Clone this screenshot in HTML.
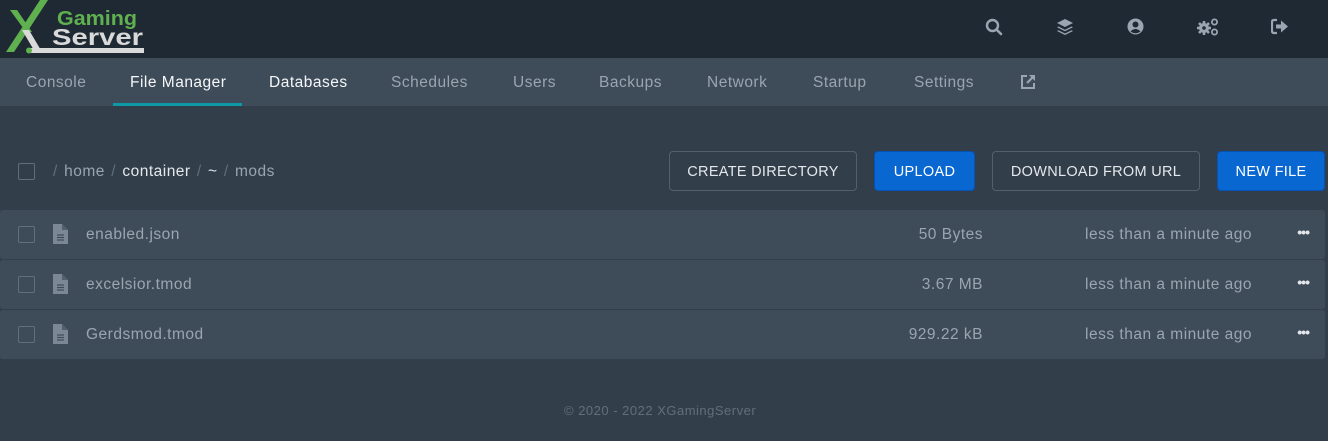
<!DOCTYPE html>
<html><head><meta charset="utf-8"><style>
*{box-sizing:border-box;margin:0;padding:0}
body{width:1328px;height:441px;background:#323f4b;font-family:"Liberation Sans",sans-serif;overflow:hidden;position:relative;color:#cbd2d9}
.top{position:absolute;left:0;top:0;width:1328px;height:58px;background:#1f2933}
.nav{position:absolute;left:0;top:58px;width:1328px;height:48px;background:#3e4c59}
.nav span{position:absolute;top:16px;font-size:15.5px;letter-spacing:.5px;color:#9aa5b1}
.ic{position:absolute;top:18px}
.t{position:absolute;white-space:nowrap}
.cb{position:absolute;width:17px;height:17px;border:1px solid #616e7c;border-radius:2px}
.btn{position:absolute;top:151px;height:40px;border-radius:4px;font-size:14.5px;letter-spacing:.3px;display:flex;align-items:center;justify-content:center;color:#e4e7eb;padding-top:1px}
.o{border:1px solid #52606d;background:#323f4b}
.b{background:#0967d2;border:1px solid #0552b5;color:#fff}
.row{position:absolute;left:0;width:1325px;height:49px;background:#3e4c59;border-radius:3px}
.row .cb{left:18px;top:16px}
.row div.n,.row div.s,.row div.d{position:absolute;top:16px;font-size:15.5px;letter-spacing:.5px;color:#9aa5b1;white-space:nowrap}
.row .n{left:86px}
.row .s{right:342px}
.row .d{right:73px}
.row .m{position:absolute;right:16px;top:14px;font-size:14px;color:#e4e7eb;letter-spacing:-1px;font-weight:bold}
.fi{position:absolute;left:53px;top:14px}
</style></head><body>
<div class="top">
<svg width="150" height="56" viewBox="0 0 150 56" style="position:absolute;left:0;top:0">
<polygon points="10,10 17,10 32,32 26,32" fill="#5fb04f"/>
<polygon points="40,0 48,0 14,52 6,52" fill="#5fb04f"/>
<polygon points="22,30 29,30 42,52 35,52" fill="#d9d9d9"/>
<rect x="28" y="48" width="116" height="5" fill="#d9d9d9"/>
<circle cx="29" cy="50.5" r="3" fill="#5fb04f"/>
<text x="57" y="25" font-family="Liberation Sans" font-weight="bold" font-size="20" fill="#5fb04f" textLength="80" lengthAdjust="spacingAndGlyphs">Gaming</text>
<text x="52" y="45" font-family="Liberation Sans" font-weight="bold" font-size="23" fill="#d9d9d9" textLength="91" lengthAdjust="spacingAndGlyphs">Server</text>
</svg>
<svg class="ic" style="left:985px" width="18" height="18" viewBox="0 0 18 18"><circle cx="7.5" cy="7.5" r="5.5" stroke="#9aa5b1" stroke-width="2.4" fill="none"/><line x1="11.5" y1="11.5" x2="16" y2="16" stroke="#9aa5b1" stroke-width="2.6" stroke-linecap="round"/></svg>
<svg class="ic" style="left:1056px" width="18" height="18" viewBox="0 0 18 18"><path d="M9 1L17 5 9 9 1 5Z" fill="#9aa5b1"/><path d="M2.5 8.5L9 11.8 15.5 8.5 17 9.3 9 13.3 1 9.3Z" fill="#9aa5b1"/><path d="M2.5 12.2L9 15.5 15.5 12.2 17 13 9 17 1 13Z" fill="#9aa5b1"/></svg>
<svg class="ic" style="left:1127px" width="17" height="17" viewBox="0 0 17 17"><circle cx="8.5" cy="8.5" r="8" fill="#9aa5b1"/><circle cx="8.5" cy="6.5" r="3" fill="#1f2933"/><path d="M3.5 13.5Q8.5 8.5 13.5 13.5Q8.5 17 3.5 13.5Z" fill="#1f2933"/></svg>
<svg class="ic" style="left:1197px" width="22" height="18" viewBox="0 0 22 18"><circle cx="7" cy="10" r="5" fill="#9aa5b1"/><g stroke="#9aa5b1" stroke-width="2.6"><line x1="7" y1="3" x2="7" y2="17"/><line x1="0" y1="10" x2="14" y2="10"/><line x1="2" y1="5" x2="12" y2="15"/><line x1="12" y1="5" x2="2" y2="15"/></g><circle cx="7" cy="10" r="1.8" fill="#1f2933"/><circle cx="17.5" cy="4" r="2.6" stroke="#9aa5b1" stroke-width="1.8" fill="none"/><circle cx="17.5" cy="14" r="2.6" stroke="#9aa5b1" stroke-width="1.8" fill="none"/></svg>
<svg class="ic" style="left:1271px" width="18" height="17" viewBox="0 0 18 17"><path d="M6 2H3Q1 2 1 4V13Q1 15 3 15H6" stroke="#9aa5b1" stroke-width="2.2" fill="none"/><path d="M5 6.5H10V2.5L17 8.5 10 14.5V10.5H5Z" fill="#9aa5b1"/></svg>
</div>
<div class="nav">
<span style="left:26px">Console</span>
<span style="left:130px;color:#f5f7fa">File Manager</span>
<div style="position:absolute;left:113px;top:45px;width:129px;height:3px;background:#0d9aa6"></div>
<span style="left:269px;color:#f5f7fa">Databases</span>
<span style="left:391px">Schedules</span>
<span style="left:513px">Users</span>
<span style="left:599px">Backups</span>
<span style="left:707px">Network</span>
<span style="left:813px">Startup</span>
<span style="left:914px">Settings</span>
<svg style="position:absolute;left:1020px;top:16px" width="16" height="16" viewBox="0 0 16 16"><path d="M7 2H2V14H14V9" stroke="#9aa5b1" stroke-width="2" fill="none"/><path d="M9 1H15V7Z" fill="#9aa5b1"/><line x1="14" y1="2" x2="7" y2="9" stroke="#9aa5b1" stroke-width="2.2"/></svg>
</div>
<div class="cb" style="left:18px;top:163px"></div>
<div class="t" style="left:53px;top:163px;font-size:15.5px;letter-spacing:.5px;word-spacing:1.5px;color:#9aa5b1"><span style="color:#616e7c">/</span> home <span style="color:#616e7c">/</span> <span style="color:#e4e7eb">container</span> <span style="color:#616e7c">/</span> <span style="color:#e4e7eb">~</span> <span style="color:#616e7c">/</span> mods</div>
<div class="btn o" style="left:669px;width:188px">CREATE DIRECTORY</div>
<div class="btn b" style="left:874px;width:101px">UPLOAD</div>
<div class="btn o" style="left:992px;width:208px">DOWNLOAD FROM URL</div>
<div class="btn b" style="left:1217px;width:108px">NEW FILE</div>

<div class="row" style="top:210px"><div class="cb"></div><svg class="fi" width="15" height="20" viewBox="0 0 15 20"><path d="M0 0H9L15 6V20H0Z" fill="#7b8794"/><path d="M9 0V6H15" fill="#52606d"/><g stroke="#3e4c59" stroke-width="1.2"><line x1="4" y1="11" x2="11" y2="11"/><line x1="4" y1="13.5" x2="11" y2="13.5"/><line x1="4" y1="16" x2="11" y2="16"/></g></svg><div class="n">enabled.json</div><div class="s">50 Bytes</div><div class="d">less than a minute ago</div><div class="m">•••</div></div>
<div class="row" style="top:260px"><div class="cb"></div><svg class="fi" width="15" height="20" viewBox="0 0 15 20"><path d="M0 0H9L15 6V20H0Z" fill="#7b8794"/><path d="M9 0V6H15" fill="#52606d"/><g stroke="#3e4c59" stroke-width="1.2"><line x1="4" y1="11" x2="11" y2="11"/><line x1="4" y1="13.5" x2="11" y2="13.5"/><line x1="4" y1="16" x2="11" y2="16"/></g></svg><div class="n">excelsior.tmod</div><div class="s">3.67 MB</div><div class="d">less than a minute ago</div><div class="m">•••</div></div>
<div class="row" style="top:310px"><div class="cb"></div><svg class="fi" width="15" height="20" viewBox="0 0 15 20"><path d="M0 0H9L15 6V20H0Z" fill="#7b8794"/><path d="M9 0V6H15" fill="#52606d"/><g stroke="#3e4c59" stroke-width="1.2"><line x1="4" y1="11" x2="11" y2="11"/><line x1="4" y1="13.5" x2="11" y2="13.5"/><line x1="4" y1="16" x2="11" y2="16"/></g></svg><div class="n">Gerdsmod.tmod</div><div class="s">929.22 kB</div><div class="d">less than a minute ago</div><div class="m">•••</div></div>

<div class="t" style="left:564px;top:403px;font-size:13px;letter-spacing:.5px;color:#616e7c">© 2020 - 2022 XGamingServer</div>
</body></html>
